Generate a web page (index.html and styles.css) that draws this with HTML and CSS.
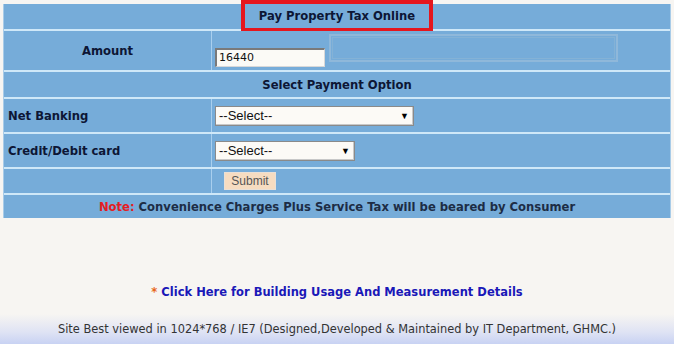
FILE: index.html
```html
<!DOCTYPE html>
<html>
<head>
<meta charset="utf-8">
<link rel="stylesheet" href="styles.css">
</head>
<body>
<div class="page">
  <div class="form">
    <div class="row head">
      <div class="cell full"><span class="title">Pay Property Tax Online</span></div>
    </div>
    <div class="row amount">
      <div class="cell label center">Amount</div>
      <div class="cell field amount-field">
        <div class="input">16440</div>
        <div class="blank"></div>
      </div>
    </div>
    <div class="row head">
      <div class="cell full">Select Payment Option</div>
    </div>
    <div class="row opt">
      <div class="cell label">Net Banking</div>
      <div class="cell field"><div class="select wide"><span>--Select--</span><span class="arrow">▼</span></div></div>
    </div>
    <div class="row opt">
      <div class="cell label">Credit/Debit card</div>
      <div class="cell field"><div class="select narrow"><span>--Select--</span><span class="arrow">▼</span></div></div>
    </div>
    <div class="row submit-row">
      <div class="cell"></div>
      <div class="cell field"><button class="btn">Submit</button></div>
    </div>
    <div class="row note-row">
      <div class="cell full"><span class="note">Note:</span> Convenience Charges Plus Service Tax will be beared by Consumer</div>
    </div>
  </div>
  <div class="link-area">
    <span class="star">*</span> <a class="link" href="#">Click Here for Building Usage And Measurement Details</a>
  </div>
  <div class="footer">Site Best viewed in 1024*768 / IE7 (Designed,Developed &amp; Maintained by IT Department, GHMC.)</div>
</div>
</body>
</html>
```

FILE: styles.css
```css
html, body {
  margin: 0;
  padding: 0;
  background: #f7f5f2;
}
.page {
  width: 674px;
  height: 344px;
  display: flex;
  flex-direction: column;
  font-family: "DejaVu Sans", Verdana, sans-serif;
  overflow: hidden;
}
.form {
  margin: 4px 3px 0 3px;
  display: flex;
  flex-direction: column;
  gap: 2px;
  background: #cfe8f8;
  border-left: 1px solid #a9cce8;
  border-right: 1px solid #a9cce8;
}
.row {
  display: grid;
  grid-template-columns: 207px 1fr;
  column-gap: 1px;
  background: #a9cfee;
}
.cell {
  background: #76acd9;
  font-size: 11.6px;
  font-weight: bold;
  color: #0d1635;
  display: flex;
  align-items: center;
}
.full {
  grid-column: 1 / 3;
  justify-content: center;
}
.head { height: 25px; }
.amount { height: 39px; }
.opt { height: 33px; }
.submit-row { height: 24px; }
.note-row { height: 23px; }
.label { padding-left: 4px; }
.center { justify-content: center; padding-left: 0; padding-top: 1px; }
.title {
  display: inline-block;
  border: 4px solid #e5161d;
  padding: 5px 14px 5px 14px;
  margin: -4px 0 -3px 0;
  line-height: 14px;
}
.field { padding-left: 3px; }
.amount-field {
  align-items: flex-start;
  gap: 4px;
}
.input {
  margin-top: 17px;
  width: 105px;
  height: 16px;
  background: #fbfaf6;
  border-top: 2px solid #7a7a7a;
  border-left: 2px solid #7a7a7a;
  border-bottom: 1px solid #d8d8d8;
  border-right: 1px solid #d8d8d8;
  font-size: 11px;
  font-weight: normal;
  color: #111;
  line-height: 16px;
  padding-left: 2px;
  box-sizing: content-box;
}
.blank {
  margin-top: 3px;
  width: 285px;
  height: 24px;
  border: 2px solid #8fb8da;
  outline: 1px solid #84b2d6;
  outline-offset: -4px;
}
.select {
  height: 18px;
  background: #fcfaf6;
  border: 1px solid #8a8a8a;
  box-shadow: inset -1px -1px 0 #c8c8c8;
  display: flex;
  align-items: center;
  justify-content: space-between;
  font-family: "Liberation Sans", Arial, sans-serif;
  font-size: 13px;
  font-weight: normal;
  color: #111;
  padding: 0 4px 0 3px;
  box-sizing: content-box;
}
.wide { width: 190px; }
.narrow { width: 131px; }
.arrow {
  font-size: 9px;
  color: #000;
}
.btn {
  margin-left: 9px;
  height: 18px;
  width: 52px;
  padding: 0;
  background: #f6dcc1;
  border: 1px solid #eae0d6;
  font-family: "Liberation Sans", Arial, sans-serif;
  font-size: 12px;
  color: #555;
}
.note-row .cell { color: #1d2c45; }
.note { color: #e41d23; margin-right: 4px; }
.link-area {
  margin-top: 66px;
  text-align: center;
  font-size: 11.5px;
  font-weight: bold;
  height: 16px;
  line-height: 16px;
}
.star { color: #e8651a; }
.link {
  color: #1a18b8;
  text-decoration: none;
}
.footer {
  margin-top: auto;
  height: 30px;
  line-height: 30px;
  text-align: center;
  font-size: 11.4px;
  color: #333;
  background: linear-gradient(#f7f5f2, #dfe3f4 60%, #c8d2f3);
}
```
